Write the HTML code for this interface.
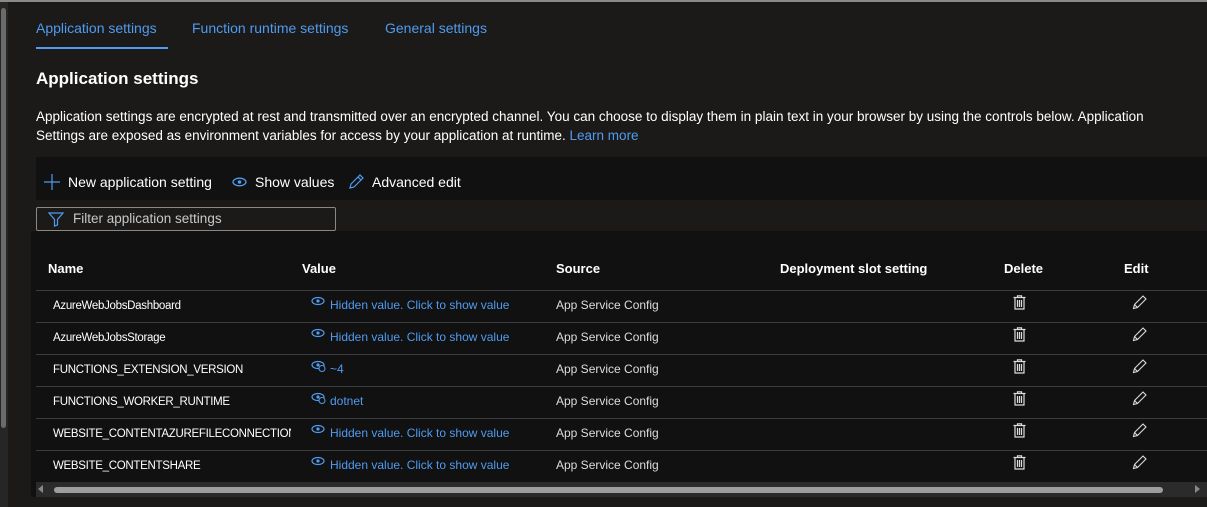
<!DOCTYPE html><html><head><style>
*{margin:0;padding:0;box-sizing:border-box}
body{width:1207px;height:507px;background:#1b1a19;font-family:"Liberation Sans",sans-serif;color:#fff;position:relative;overflow:hidden}
.a{position:absolute;white-space:nowrap}
.blue{color:#4f9bf0}
.r{position:absolute;left:36px;right:0;height:1px;background:#3a3d42}
.n{position:absolute;left:53px;font-size:11.5px;letter-spacing:-0.3px}
.v{position:absolute;left:312px;font-size:12px;color:#4f9bf0}
.s{position:absolute;left:556px;font-size:12px;color:#ddd}
.h{position:absolute;top:261px;font-size:13px;font-weight:bold}
</style></head><body>
<div class="a" style="left:0;top:0;width:1207px;height:2px;background:#8a8a8a"></div>
<div class="a" style="left:0;top:2px;width:8px;height:505px;background:#262626"></div>
<div class="a" style="left:1px;top:8px;width:5px;height:420px;background:#6b6b6b;border-radius:3px"></div>
<div class="a blue" style="left:36px;top:20px;font-size:14px">Application settings</div>
<div class="a" style="left:36px;top:47px;width:132px;height:2px;background:#4f9bf0"></div>
<div class="a blue" style="left:192px;top:20px;font-size:14px">Function runtime settings</div>
<div class="a blue" style="left:385px;top:20px;font-size:14px">General settings</div>
<div class="a" style="left:36px;top:69px;font-size:17px;font-weight:bold">Application settings</div>
<div class="a" style="left:36px;top:107px;font-size:13.5px;line-height:19px;white-space:normal;width:1160px">Application settings are encrypted at rest and transmitted over an encrypted channel. You can choose to display them in plain text in your browser by using the controls below. Application Settings are exposed as environment variables for access by your application at runtime. <span class="blue">Learn more</span></div>
<div class="a" style="left:36px;top:157px;width:1171px;height:43px;background:#111"></div>
<svg class="a" style="left:44px;top:174px" width="16" height="16"><path d="M8 0v16M0 8h16" stroke="#4f9bf0" stroke-width="1.2"/></svg>
<div class="a" style="left:68px;top:174px;font-size:14px">New application setting</div>
<svg class="a" style="left:232px;top:177px" width="15" height="10"><ellipse cx="7.5" cy="5" rx="6.5" ry="3.8" fill="none" stroke="#4f9bf0" stroke-width="1.3"/><circle cx="7.5" cy="5" r="1.8" fill="#4f9bf0"/></svg>
<div class="a" style="left:255px;top:174px;font-size:14px">Show values</div>
<svg class="a" style="left:348px;top:174px" width="16" height="16"><path d="M2 14l1-4L12 1l3 3-9 9z M10 3l3 3" fill="none" stroke="#4f9bf0" stroke-width="1.2"/></svg>
<div class="a" style="left:372px;top:174px;font-size:14px">Advanced edit</div>
<div class="a" style="left:36px;top:207px;width:300px;height:24px;border:1px solid #8a8886;border-radius:2px"></div>
<svg class="a" style="left:48px;top:211px" width="16" height="16"><path d="M1 2h14l-5.5 6.5V14l-3 1V8.5z" fill="none" stroke="#4f9bf0" stroke-width="1.2"/></svg>
<div class="a" style="left:73px;top:211px;font-size:13.5px;color:#c8c8c8">Filter application settings</div>
<div class="a" style="left:31px;top:231px;width:1176px;height:266px;background:#111"></div>
<div class="h" style="left:48px">Name</div><div class="h" style="left:302px">Value</div><div class="h" style="left:556px">Source</div><div class="h" style="left:780px">Deployment slot setting</div><div class="h" style="left:1004px">Delete</div><div class="h" style="left:1124px">Edit</div>
<div class="r" style="top:290px"></div><div class="r" style="top:322px"></div><div class="r" style="top:354px"></div><div class="r" style="top:386px"></div><div class="r" style="top:418px"></div><div class="r" style="top:450px"></div>
<div id="rows"></div>
<div class="a" style="left:36px;top:482px;width:1171px;height:15px;background:#2b2b2b"></div>
<div class="a" style="left:54px;top:487px;width:1109px;height:6px;background:#9e9e9e;border-radius:3px"></div>
<div class="a" style="left:38px;top:485px;width:0;height:0;border:4px solid transparent;border-right:5px solid #888;border-left:0"></div>
<div class="a" style="left:1195px;top:485px;width:0;height:0;border:4px solid transparent;border-left:5px solid #888;border-right:0"></div>
<script>
var d=[["AzureWebJobsDashboard","Hidden value. Click to show value",0],["AzureWebJobsStorage","Hidden value. Click to show value",0],["FUNCTIONS_EXTENSION_VERSION","~4",1],["FUNCTIONS_WORKER_RUNTIME","dotnet",1],["WEBSITE_CONTENTAZUREFILECONNECTIONSTRING","Hidden value. Click to show value",0],["WEBSITE_CONTENTSHARE","Hidden value. Click to show value",0]];
var h="";d.forEach(function(r,i){var t=290+i*32;
h+='<div class="n" style="top:'+(t+10)+'px;width:238px;overflow:hidden">'+r[0]+'</div>';
h+='<svg class="a" style="left:311px;top:'+(t+6)+'px" width="15" height="12"><ellipse cx="7" cy="5" rx="6" ry="3.5" fill="none" stroke="#4f9bf0" stroke-width="1.2"/><circle cx="7" cy="5" r="1.6" fill="#4f9bf0"/>'+(r[2]?'<circle cx="11" cy="8.5" r="3" fill="#111" stroke="#4f9bf0"/>':'')+'</svg>';
h+='<div class="v" style="left:330px;top:'+(t+8)+'px">'+r[1]+'</div>';
h+='<div class="s" style="top:'+(t+8)+'px">App Service Config</div>';
h+='<svg class="a" style="left:1013px;top:'+(t+5)+'px" width="13" height="15"><path d="M0.5 2.5h12M4.5 2.5V0.8h4v1.7M2 3v11h9V3M4.5 5v7M6.5 5v7M8.5 5v7" fill="none" stroke="#ddd" stroke-width="1.2"/></svg>';
h+='<svg class="a" style="left:1132px;top:'+(t+4)+'px" width="16" height="16"><path d="M1.5 14.5l1-4L11 2l3 3-8.5 8.5zM2.5 10.5l3 3" fill="none" stroke="#ddd" stroke-width="1.1"/></svg>';});
document.getElementById("rows").innerHTML=h;
</script>
</body></html>
